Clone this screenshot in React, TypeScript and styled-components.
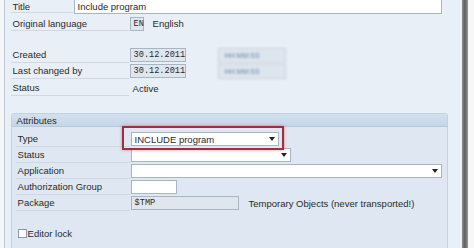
import React from 'react'
import styled, { createGlobalStyle } from 'styled-components'

const GlobalStyle = createGlobalStyle`
    html, body {
        margin:0;
        padding:0;
        background:#ffffff;
    }
    body {
        font-family:"Liberation Sans", "DejaVu Sans", sans-serif;
        font-size:9.5px;
        color:#2a2a2a;
    }
`

const Screen = styled.div`
    display:flex;
    width:474px;
    height:248px;
    overflow:hidden;
`

const LeftEdge = styled.div`
    width:4px;
    background:#f4f7fa;
    border-right:1px solid #c3ccd6;
`

const Main = styled.div`
    flex:1;
    background:#e9eff6;
    padding:0 14px 0 6px;
    display:flex;
    flex-direction:column;
`

const RightEdge = styled.div`
    width:14px;
    display:flex;
`

const Shadow = styled.div`
    width:6px;
    background:linear-gradient(to right, #8c8c8c, #5e5e5e 50%, #9a9a9a);
`

const Blank = styled.div`
    flex:1;
    background:#f7f7f7;
`

const Row = styled.div<{ h?: number; mt?: number }>`
    display:flex;
    align-items:center;
    height:${p => p.h ?? 16}px;
    margin-top:${p => p.mt ?? 0}px;
`

const Label = styled.div<{ w?: number }>`
    width:${p => p.w ?? 118}px;
    flex-shrink:0;
    height:100%;
    box-sizing:border-box;
    padding-left:2px;
    display:flex;
    align-items:center;
    border-bottom:1px solid #d0d8e0;
    margin-right:1px;
`

const Field = styled.div<{ w: number; tone?: 'white' | 'grey'; mono?: boolean; noTop?: boolean }>`
    width:${p => p.w}px;
    height:14px;
    box-sizing:border-box;
    border:1px solid #a8b5c3;
    border-top:${p => (p.noTop ? 'none' : '1px solid #a8b5c3')};
    background:${p => (p.tone === 'grey' ? '#dfe6ee' : '#ffffff')};
    display:flex;
    align-items:center;
    padding:0 3px;
    font-family:${p => (p.mono ? '"Liberation Mono", "DejaVu Sans Mono", monospace' : 'inherit')};
    font-size:${p => (p.mono ? '8.6px' : '9.5px')};
    flex-shrink:0;
`

const Arrow = styled.span`
    margin-left:auto;
    width:0;
    height:0;
    border-left:3px solid transparent;
    border-right:3px solid transparent;
    border-top:4px solid #222;
`

const Value = styled.span<{ ml?: number }>`
    margin-left:${p => p.ml ?? 3}px;
`

const Blurred = styled.div`
    margin-left:32px;
    width:68px;
    height:15px;
    box-sizing:border-box;
    border:1px solid #c9d1da;
    background:#dde6ef;
    display:flex;
    align-items:center;
    padding-left:6px;
    color:#6f82a0;
    font-size:7px;
    filter:blur(0.8px);
`

const Panel = styled.div`
    margin-top:17px;
    width:435px;
    flex:1;
    display:flex;
    flex-direction:column;
    background:#dfe8f2;
    border:1px solid #c2d2e2;
    border-bottom:none;
    border-radius:3px 3px 0 0;
`

const PanelHeader = styled.div`
    height:12px;
    display:flex;
    align-items:center;
    padding-left:5px;
    background:linear-gradient(#d3e1ef, #c5d6e8);
    border-bottom:1px solid #b7c9dc;
`

const PanelBody = styled.div`
    padding:3px 0 0 4px;
    display:flex;
    flex-direction:column;
`

const Highlight = styled.div`
    position:relative;
    &::after{
        content:'';
        position:absolute;
        top:-6px;
        left:-9px;
        right:-5px;
        bottom:-4px;
        border:2px solid #a02e3d;
        box-shadow:0 0 3px rgba(200,70,90,0.6);
        pointer-events:none;
    }
`

const CheckRow = styled.label`
    display:flex;
    align-items:center;
    margin-top:15px;
    height:14px;
    padding-left:2px;
`

const Box = styled.span`
    width:9px;
    height:9px;
    box-sizing:border-box;
    border:1px solid #8a98a8;
    background:#ffffff;
    margin-right:1px;
`

const App = () => {
    return (
        <Screen>
            <GlobalStyle />
            <LeftEdge />
            <Main>
                <Row h={13}>
                    <Label w={62}>Title</Label>
                    <Field w={368} noTop>Include program</Field>
                </Row>
                <Row h={15} mt={3}>
                    <Label>Original language</Label>
                    <Field w={14} tone="grey" mono>EN</Field>
                    <Value ml={9}>English</Value>
                </Row>
                <Row h={16} mt={16}>
                    <Label>Created</Label>
                    <Field w={56} tone="grey" mono>30.12.2011</Field>
                    <Blurred>HH:MM:SS</Blurred>
                </Row>
                <Row h={16}>
                    <Label>Last changed by</Label>
                    <Field w={56} tone="grey" mono>30.12.2011</Field>
                    <Blurred>HH:MM:SS</Blurred>
                </Row>
                <Row h={16} mt={1}>
                    <Label>Status</Label>
                    <Value>Active</Value>
                </Row>
                <Panel>
                    <PanelHeader>Attributes</PanelHeader>
                    <PanelBody>
                        <Row h={16} mt={1}>
                            <Label w={114}>Type</Label>
                            <Highlight>
                                <Field w={148}>INCLUDE program<Arrow /></Field>
                            </Highlight>
                        </Row>
                        <Row h={16}>
                            <Label w={114}>Status</Label>
                            <Field w={160}><Arrow /></Field>
                        </Row>
                        <Row h={16}>
                            <Label w={114}>Application</Label>
                            <Field w={311}><Arrow /></Field>
                        </Row>
                        <Row h={16}>
                            <Label w={114}>Authorization Group</Label>
                            <Field w={46} />
                        </Row>
                        <Row h={16}>
                            <Label w={114}>Package</Label>
                            <Field w={108} tone="grey" mono>$TMP</Field>
                            <Value ml={10}>Temporary Objects (never transported!)</Value>
                        </Row>
                        <CheckRow>
                            <Box />
                            Editor lock
                        </CheckRow>
                    </PanelBody>
                </Panel>
            </Main>
            <RightEdge>
                <Shadow />
                <Blank />
            </RightEdge>
        </Screen>
    )
}

export default App
